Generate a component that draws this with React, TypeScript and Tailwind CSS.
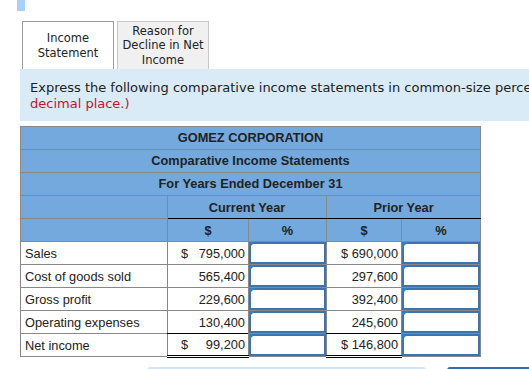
import React from "react";

type Row = {
  label: string;
  cur: string;
  curSign: boolean;
  prior: string;
  topBlack?: boolean;
};

const rows: Row[] = [
  { label: "Sales", cur: "795,000", curSign: true, prior: "$ 690,000" },
  { label: "Cost of goods sold", cur: "565,400", curSign: false, prior: "297,600" },
  { label: "Gross profit", cur: "229,600", curSign: false, prior: "392,400", topBlack: true },
  { label: "Operating expenses", cur: "130,400", curSign: false, prior: "245,600" },
  { label: "Net income", cur: "99,200", curSign: true, prior: "$ 146,800", topBlack: true },
];

// поле ввода процента с синей рамкой и маленьким треугольником в углу
function PctInput() {
  return (
    <div className="relative h-[22px] w-full border-2 border-[#3d74ad] bg-white">
      <div className="absolute -left-[2px] -top-[2px] h-0 w-0 border-l-[6px] border-b-[6px] border-l-[#2f7fd1] border-b-transparent" />
    </div>
  );
}

export default function App() {
  return (
    <div className="relative h-[369px] w-[529px] overflow-hidden bg-white">
      <div className="absolute left-[17px] top-0 h-[11px] w-[8px] bg-[#a9d1f7]" />

      {/* вкладки */}
      <div className="flex gap-[3px] pl-[22px] pt-[21px] font-['DejaVu_Sans',sans-serif] text-[11.5px] leading-[14.5px] text-[#222]">
        <div className="flex h-[48px] w-[92px] items-center justify-center border border-b-0 border-[#9a9a9a] bg-white text-center">
          Income
          <br />
          Statement
        </div>
        <div className="flex h-[48px] w-[92px] items-center justify-center border border-b-0 border-[#c8c8c8] bg-[#f0f0f0] text-center">
          Reason for
          <br />
          Decline in Net
          <br />
          Income
        </div>
      </div>

      {/* задание */}
      <div className="ml-[20px] h-[52px] whitespace-nowrap bg-[#d9ebf7] pl-[10px] pt-[11px] font-['DejaVu_Sans',sans-serif] text-[13px] leading-[16px] text-[#222]">
        <div>Express the following comparative income statements in common-size percentages. (Round your percentage answers to 1</div>
        <div className="text-[#c8102e]">decimal place.)</div>
      </div>

      {/* таблица */}
      <div className="ml-[20px] mt-[5px] w-[460px] font-['Liberation_Sans',Arial,sans-serif] text-[12.8px] leading-[15px] text-[#222]">
        <table className="w-full table-fixed border-collapse">
          <colgroup>
            <col className="w-[147px]" />
            <col className="w-[81px]" />
            <col className="w-[78px]" />
            <col className="w-[75px]" />
            <col className="w-[79px]" />
          </colgroup>
          <tbody>
            {["GOMEZ CORPORATION", "Comparative Income Statements", "For Years Ended December 31"].map((t) => (
              <tr key={t} className="h-[23px] bg-[#73a9dc]">
                <td colSpan={5} className="border border-[#888] p-0 pb-[1px] text-center font-bold">
                  {t}
                </td>
              </tr>
            ))}
            <tr className="h-[23px] bg-[#73a9dc] font-bold">
              <td className="border border-[#888] p-0" />
              <td colSpan={2} className="border border-[#888] border-b-black p-0 text-center">
                Current Year
              </td>
              <td colSpan={2} className="border border-[#888] border-b-black p-0 text-center">
                Prior Year
              </td>
            </tr>
            <tr className="h-[23px] bg-[#73a9dc] font-bold">
              <td className="border border-[#888] p-0" />
              <td className="border border-[#888] border-t-black p-0 text-center">$</td>
              <td className="border border-[#888] border-t-black p-0 text-center">%</td>
              <td className="border border-[#888] border-t-black p-0 text-center">$</td>
              <td className="border border-[#888] border-t-black p-0 text-center">%</td>
            </tr>
            {rows.map((r, i) => {
              const last = i === rows.length - 1;
              return (
                <tr key={r.label} className="h-[23px]">
                  <td className="border border-[#888] p-0 pl-[4px]">{r.label}</td>
                  <td
                    className={
                      "border border-[#888] p-0 pr-[3px] " +
                      (r.topBlack ? "border-t-black " : "") +
                      (last ? "border-b-[3px] border-double border-b-black" : "")
                    }
                  >
                    <div className="flex justify-between pl-[13px]">
                      <span>{r.curSign ? "$" : ""}</span>
                      <span>{r.cur}</span>
                    </div>
                  </td>
                  <td className="border border-[#888] p-0">
                    <PctInput />
                  </td>
                  <td
                    className={
                      "border border-[#888] p-0 pr-[3px] text-right " +
                      (r.topBlack ? "border-t-black " : "") +
                      (last ? "border-b-[3px] border-double border-b-black" : "")
                    }
                  >
                    {r.prior}
                  </td>
                  <td className="border border-[#888] p-0">
                    <PctInput />
                  </td>
                </tr>
              );
            })}
          </tbody>
        </table>
      </div>

      {/* кнопки внизу (обрезаны) */}
      <div className="absolute left-[147px] top-[367px] h-[4px] w-[279px] rounded-t-[3px] bg-[#d3e5f5]" />
      <div className="absolute left-[447px] top-[367px] h-[4px] w-[90px] rounded-t-[3px] bg-[#2f6fae]" />
    </div>
  );
}
